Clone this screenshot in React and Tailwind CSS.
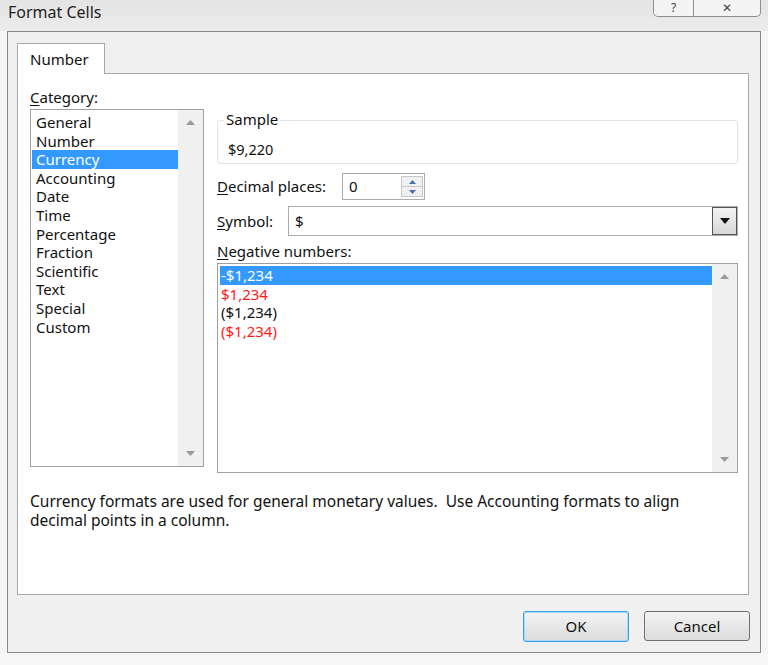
import React from "react";

const categories = ["General", "Number", "Currency", "Accounting", "Date", "Time", "Percentage", "Fraction", "Scientific", "Text", "Special", "Custom"];

const negatives = [
  { label: "-$1,234", cls: "text-white bg-[#3399ff]" },
  { label: "$1,234", cls: "text-[#ff1a1a]" },
  { label: "($1,234)", cls: "text-[#111]" },
  { label: "($1,234)", cls: "text-[#ff1a1a]" },
];

const UpTri = () => (
  <svg width="9" height="5" viewBox="0 0 9 5"><path d="M0 5 L4.5 0 L9 5 Z" fill="#9a9a9a" /></svg>
);
const DownTri = () => (
  <svg width="9" height="5" viewBox="0 0 9 5"><path d="M0 0 L4.5 5 L9 0 Z" fill="#9a9a9a" /></svg>
);

const ScrollBar = () => (
  <div className="w-[25px] h-full bg-[#f0f0f0] flex flex-col items-center justify-between py-[10px]">
    <UpTri />
    <DownTri />
  </div>
);

const Label = ({ u, rest }) => (
  <span><span className="underline underline-offset-2">{u}</span>{rest}</span>
);

const App = () => {
  return (
    <div className="w-[768px] h-[665px] bg-[#f6f6f6] text-[#111] overflow-hidden" style={{ fontFamily: "'Noto Sans', 'Open Sans', sans-serif" }}>
      {/* title bar */}
      <div className="h-[31px] flex items-start bg-gradient-to-b from-[#e4e4e4] to-[#ececec]">
        <div className="pl-[8px] pt-[1px] text-[16px] leading-[22px] text-[#1e1e1e]">Format Cells</div>
        <div className="ml-auto mr-[7px] flex">
          <div className="w-[41px] h-[17px] border border-t-0 border-[#8f8f8f] rounded-bl-[5px] bg-[#f4f4f4] flex justify-center">
            <span className="text-[12px] leading-[15px] text-[#444]">?</span>
          </div>
          <div className="w-[67px] h-[17px] border border-t-0 border-l-0 border-[#8f8f8f] rounded-br-[5px] bg-[#f4f4f4] flex justify-center">
            <span className="text-[12px] leading-[15px] text-[#444]">✕</span>
          </div>
        </div>
      </div>

      {/* dialog frame */}
      <div className="ml-[7px] w-[754px] h-[622px] border border-[#8a8a8a] bg-[#f0f0f0] pl-[9px] pt-[11px]">
        {/* tab */}
        <div className="w-[88px] h-[31px] bg-white border border-b-0 border-[#a8a8a8] flex items-center pl-[12px] text-[15px] relative z-10 mb-[-1px]">
          Number
        </div>
        {/* panel */}
        <div className="w-[732px] h-[522px] bg-white border border-[#a8a8a8] pl-[12px] pt-[13px] flex flex-col">
          <div className="flex gap-[13px]">
            {/* left column */}
            <div className="w-[174px] flex flex-col">
              <div className="text-[15px] leading-[20px] h-[22px]"><Label u="C" rest="ategory:" /></div>
              <div className="h-[358px] border border-[#a0a0a0] flex">
                <div className="flex-1 pt-[3px] pl-[1px] text-[15px] leading-[18.6px]">
                  {categories.map((c) => (
                    <div key={c} className={c === "Currency" ? "bg-[#3399ff] text-white pl-[4px]" : "pl-[4px]"}>{c}</div>
                  ))}
                </div>
                <ScrollBar />
              </div>
            </div>

            {/* right column */}
            <div className="w-[521px] flex flex-col pt-[33px]">
              <div className="h-[44px] border border-[#dde3ea] rounded-[4px] relative">
                <span className="absolute -top-[12px] left-[6px] bg-white px-[2px] text-[15px] leading-[20px]">Sample</span>
                <div className="pl-[10px] pt-[18px] text-[14.5px] leading-[20px]">$9,220</div>
              </div>
              <div className="flex items-center mt-[9px] h-[27px]">
                <div className="w-[125px] text-[15px]"><Label u="D" rest="ecimal places:" /></div>
                <div className="w-[83px] h-[27px] border border-[#ababab] flex">
                  <div className="flex-1 pl-[6px] text-[15px] leading-[25px]">0</div>
                  <div className="w-[22px] my-[2px] mr-[1px] flex flex-col border border-[#c8c8c8]">
                    <div className="flex-1 bg-[#eef0f4] flex items-center justify-center border-b border-[#c8c8c8]">
                      <svg width="7" height="4" viewBox="0 0 7 4"><path d="M0 4 L3.5 0 L7 4 Z" fill="#4a6fa8" /></svg>
                    </div>
                    <div className="flex-1 bg-[#eef0f4] flex items-center justify-center">
                      <svg width="7" height="4" viewBox="0 0 7 4"><path d="M0 0 L3.5 4 L7 0 Z" fill="#4a6fa8" /></svg>
                    </div>
                  </div>
                </div>
              </div>
              <div className="flex items-center mt-[6px] h-[30px]">
                <div className="w-[71px] text-[15px]"><Label u="S" rest="ymbol:" /></div>
                <div className="flex-1 h-[30px] border border-[#ababab] flex">
                  <div className="flex-1 pl-[6px] text-[15px] leading-[28px]">$</div>
                  <div className="w-[25px] border border-[#555] bg-gradient-to-b from-[#f2f2f2] to-[#d8d8d8] flex items-center justify-center">
                    <svg width="10" height="6" viewBox="0 0 10 6"><path d="M0 0 L5 6 L10 0 Z" fill="#111" /></svg>
                  </div>
                </div>
              </div>
              <div className="text-[15px] leading-[20px] mt-[5px] h-[22px]"><Label u="N" rest="egative numbers:" /></div>
              <div className="h-[210px] border border-[#a0a0a0] flex">
                <div className="flex-1 pt-[2px] pl-[2px] text-[15px] leading-[18.5px]">
                  {negatives.map((n, i) => (
                    <div key={i} className={"pl-[1px] " + n.cls}>{n.label}</div>
                  ))}
                </div>
                <ScrollBar />
              </div>
            </div>
          </div>

          <div className="mt-[19px] text-[15.5px] leading-[18.5px] w-[690px]">
            Currency formats are used for general monetary values.&nbsp; Use Accounting formats to align decimal points in a column.
          </div>
        </div>

        {/* buttons */}
        <div className="flex justify-end gap-[15px] w-[733px] mt-[16px]">
          <button className="w-[106px] h-[31px] rounded-[3px] border border-[#3c9ee8] bg-gradient-to-b from-[#f3f3f3] to-[#dcdcdc] text-[15px] shadow-[inset_0_0_0_1px_#a8d8f8]">OK</button>
          <button className="w-[106px] h-[30px] rounded-[3px] border border-[#707070] bg-gradient-to-b from-[#f3f3f3] to-[#dcdcdc] text-[15px]">Cancel</button>
        </div>
      </div>
    </div>
  );
};

export default App;
